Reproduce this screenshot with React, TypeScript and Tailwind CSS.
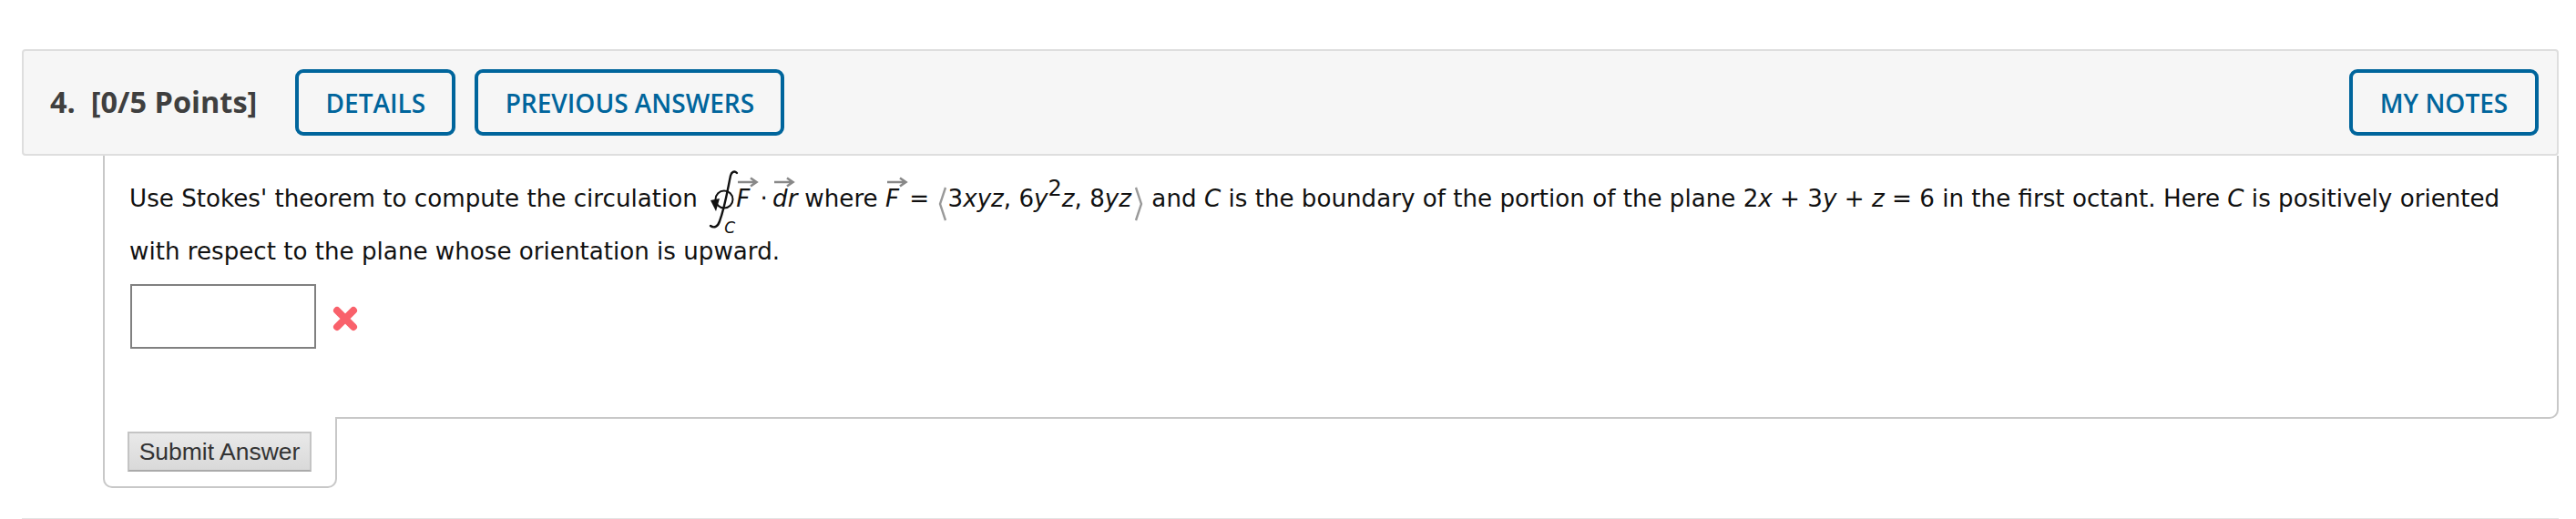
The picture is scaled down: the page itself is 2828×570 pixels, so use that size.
import React from 'react'

function HeaderButton({ label, className }: { label: string; className: string }) {
  return (
    <button className={`h-[73px] rounded-[9px] border-[4px] border-[#00659c] font-['Open_Sans',sans-serif] text-[28px] font-semibold text-[#00659c] ${className}`}>
      {label}
    </button>
  )
}

function VecArrow({ className }: { className: string }) {
  return (
    <svg viewBox="0 0 24 12" className={`absolute h-[12px] w-[24px] ${className}`}>
      <path d="M1 6h20M15 1.5 21.5 6 15 10.5" fill="none" stroke="#888" strokeWidth="2.6" />
    </svg>
  )
}

function Vec({ children, width }: { children: React.ReactNode; width: string }) {
  return (
    <span className={`relative inline-block italic ${width}`}>
      {children}
      <VecArrow className="left-[1px] top-[5px]" />
    </span>
  )
}

function ContourIntegral() {
  return (
    <span className="relative inline-block h-[20px] w-[34px] align-baseline">
      <svg viewBox="0 0 38 70" className="absolute left-0 top-[-21px] h-[70px] w-[38px] overflow-visible">
        <path d="M35 4c-3-3-6-1-7 3-3 14-6 34-12 50-2 6-6 8-10 5" fill="none" stroke="#111" strokeWidth="2.4" strokeLinecap="round" />
        <circle cx="21" cy="33" r="9.5" fill="none" stroke="#111" strokeWidth="2" />
        <path d="M6 34 16 32 12 46Z" fill="#111" />
      </svg>
      <span className="absolute left-[21px] top-[35px] text-[17px] italic leading-none">C</span>
    </span>
  )
}

function AngleBracket({ flip }: { flip?: boolean }) {
  return (
    <svg viewBox="0 0 12 40" className={`mb-[-9px] inline-block h-[40px] w-[12px] ${flip ? 'ml-[2px] rotate-180' : ''}`}>
      <path d="M9 2 3 20l6 18" fill="none" stroke="#999" strokeWidth="2.4" />
    </svg>
  )
}

export default function App() {
  return (
    <div className="h-[570px] w-[2828px] overflow-hidden bg-white pl-[24px] pr-[19px] pt-[54px] font-['DejaVu_Sans',sans-serif] text-[#111]">
      <div className="flex h-[117px] items-center rounded-[4px] border-2 border-[#dedede] bg-[#f6f6f6] pl-[29px] pr-[20px]">
        <span className="whitespace-pre font-['Open_Sans',sans-serif] text-[32.5px] font-bold text-[#3f3f3f]">4.  [0/5 Points]</span>
        <HeaderButton label="DETAILS" className="ml-[42px] w-[176px]" />
        <HeaderButton label="PREVIOUS ANSWERS" className="ml-[21px] w-[340px]" />
        <HeaderButton label="MY NOTES" className="ml-auto w-[208px]" />
      </div>

      <div className="ml-[89px]">
        <div className="rounded-br-[10px] border-x-2 border-b-2 border-[#c8c8c8] pb-[75px] pl-[27px] pr-[20px] pt-[18px]">
          <p className="text-[26.15px] leading-[58px]">
            Use Stokes' theorem to compute the circulation{' '}
            <ContourIntegral />
            <Vec width="w-[18px]">F</Vec> · <Vec width="-ml-[3px] w-[27px]"><span>dr</span></Vec> where{' '}
            <Vec width="w-[18px]">F</Vec> = <AngleBracket />3<i>xyz</i>, 6<i>y</i><sup className="text-[24px]">2</sup><i>z</i>, 8<i>yz</i><AngleBracket flip /> and <i>C</i> is the boundary of the portion of the plane 2<i>x</i> + 3<i>y</i> + <i>z</i> = 6 in the first octant. Here <i>C</i> is positively oriented with respect to the plane whose orientation is upward.
          </p>
          <div className="ml-px mt-[7px] flex items-center">
            <input className="h-[71px] w-[204px] border-2 border-[#808080] bg-white" />
            <svg viewBox="0 0 28 28" className="ml-[18px] mt-[5px] h-[28px] w-[28px]">
              <path d="M5 5 23 23M23 5 5 23" stroke="#f9616b" strokeWidth="8" strokeLinecap="round" />
            </svg>
          </div>
        </div>
        <div className="relative mt-[-2px] h-[78px] w-[257px] rounded-b-[10px] border-x-2 border-b-2 border-[#c8c8c8] bg-white pl-[25px] pt-[16px]">
          <button className="h-[44px] w-[202px] border-2 border-[#c4c4c4] border-b-[#aaaaaa] bg-gradient-to-b from-[#e9e9e9] to-[#d9d9d9] font-['Liberation_Sans',sans-serif] text-[26.5px] leading-none text-[#333]">
            Submit Answer
          </button>
        </div>
      </div>

      <div className="mt-[33px] border-t-2 border-[#e4e4e4]" />
    </div>
  )
}
